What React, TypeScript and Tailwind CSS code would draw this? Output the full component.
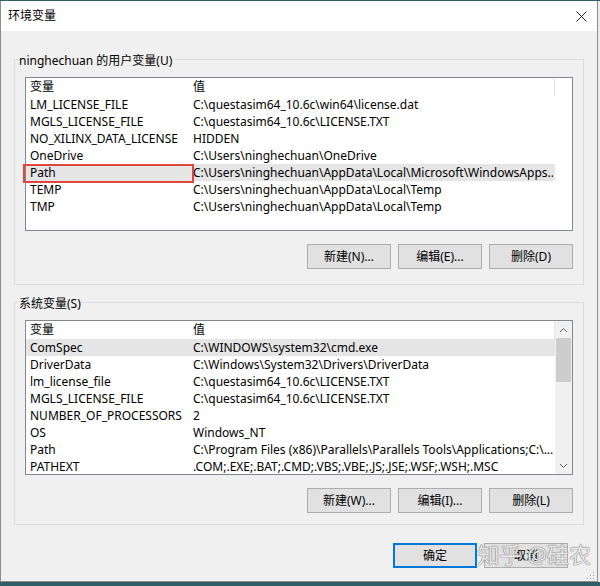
import React from "react"

type Row = { name: string; value: string; selected?: boolean; marked?: boolean }

const userVars: Row[] = [
  { name: "LM_LICENSE_FILE", value: "C:\\questasim64_10.6c\\win64\\license.dat" },
  { name: "MGLS_LICENSE_FILE", value: "C:\\questasim64_10.6c\\LICENSE.TXT" },
  { name: "NO_XILINX_DATA_LICENSE", value: "HIDDEN" },
  { name: "OneDrive", value: "C:\\Users\\ninghechuan\\OneDrive" },
  {
    name: "Path",
    value: "C:\\Users\\ninghechuan\\AppData\\Local\\Microsoft\\WindowsApps...",
    selected: true,
    marked: true,
  },
  { name: "TEMP", value: "C:\\Users\\ninghechuan\\AppData\\Local\\Temp" },
  { name: "TMP", value: "C:\\Users\\ninghechuan\\AppData\\Local\\Temp" },
]

const systemVars: Row[] = [
  { name: "ComSpec", value: "C:\\WINDOWS\\system32\\cmd.exe", selected: true },
  { name: "DriverData", value: "C:\\Windows\\System32\\Drivers\\DriverData" },
  { name: "lm_license_file", value: "C:\\questasim64_10.6c\\LICENSE.TXT" },
  { name: "MGLS_LICENSE_FILE", value: "C:\\questasim64_10.6c\\LICENSE.TXT" },
  { name: "NUMBER_OF_PROCESSORS", value: "2" },
  { name: "OS", value: "Windows_NT" },
  { name: "Path", value: "C:\\Program Files (x86)\\Parallels\\Parallels Tools\\Applications;C:\\..." },
  { name: "PATHEXT", value: ".COM;.EXE;.BAT;.CMD;.VBS;.VBE;.JS;.JSE;.WSF;.WSH;.MSC" },
]

function WinButton({ label, primary }: { label: string; primary?: boolean }) {
  return (
    <button
      className={
        "h-[25px] w-[84px] bg-[#e1e1e1] text-[12px] text-black flex items-center justify-center " +
        (primary ? "border-2 border-[#0078d7]" : "border border-[#adadad]")
      }
    >
      {label}
    </button>
  )
}

function VarList({ rows, scroll }: { rows: Row[]; scroll?: boolean }) {
  return (
    <div className="relative flex h-full border border-[#828790] bg-white">
      <div className="flex flex-1 flex-col">
        <div className="flex h-[18px] shrink-0 items-center">
          <div className="w-[165px] pl-[4px]">变量</div>
          <div className="h-full w-[364px] border-r border-[#e5e5e5] pl-[2px] leading-[18px]">值</div>
        </div>
        {rows.map((r) => (
          <div key={r.name} className="relative flex h-[17px] shrink-0 items-center">
            <div className={"flex h-full w-[529px] items-center " + (r.selected ? "bg-[#e5e5e5]" : "")}>
              <div className="flex h-full w-[165px] items-center whitespace-nowrap pl-[4px]">{r.name}</div>
              <div className="w-[362px] overflow-hidden whitespace-nowrap pl-[2px]">{r.value}</div>
            </div>
            {r.marked && (
              <div className="pointer-events-none absolute -left-[3px] -top-[0px] h-[19px] w-[171px] border-2 border-[#e0463a]" />
            )}
          </div>
        ))}
      </div>
      {scroll && (
        <div className="flex w-[17px] shrink-0 flex-col items-center bg-[#f0f0f0]">
          <div className="flex h-[17px] w-full items-center justify-center">
            <svg width="9" height="6" viewBox="0 0 9 6">
              <path d="M1 5 L4.5 1.5 L8 5" fill="none" stroke="#606060" strokeWidth="1" />
            </svg>
          </div>
          <div className="h-[44px] w-[15px] bg-[#cdcdcd]" />
          <div className="flex-1" />
          <div className="flex h-[17px] w-full items-center justify-center">
            <svg width="9" height="6" viewBox="0 0 9 6">
              <path d="M1 1 L4.5 4.5 L8 1" fill="none" stroke="#606060" strokeWidth="1" />
            </svg>
          </div>
        </div>
      )}
    </div>
  )
}

function Group({
  title,
  rows,
  scroll,
  buttons,
  height,
  listHeight,
}: {
  title: string
  rows: Row[]
  scroll?: boolean
  buttons: string[]
  height: string
  listHeight: string
}) {
  return (
    <div className={"relative mx-[13px] border border-[#dcdcdc] px-[10px] pt-[17px] " + height}>
      <span className="absolute -top-[7px] left-[3px] bg-[#f0f0f0] px-[1px] leading-[16px]">{title}</span>
      <div className={listHeight}>
        <VarList rows={rows} scroll={scroll} />
      </div>
      <div className="mt-[13px] flex justify-end gap-[7px]">
        {buttons.map((b) => (
          <WinButton key={b} label={b} />
        ))}
      </div>
    </div>
  )
}

export default function App() {
  return (
    <div className="flex h-[586px] w-[600px] flex-col bg-[#2e5e66] font-['Noto_Sans','Noto_Sans_CJK_SC',sans-serif] text-[12px] text-black">
      <div className="h-[1px] shrink-0" />
      <div className="flex flex-1 bg-[#ececec]">
        <div className="flex w-[598px] flex-col border-x border-b border-[#8c8c8c] bg-[#f0f0f0]">
          {/* title bar */}
          <div className="flex h-[30px] shrink-0 items-center justify-between bg-white pl-[7px] pr-[10px]">
            <span className="text-[12px]">环境变量</span>
            <svg width="11" height="11" viewBox="0 0 11 11">
              <path d="M0.5 0.5 L10.5 10.5 M10.5 0.5 L0.5 10.5" stroke="#222" strokeWidth="1" />
            </svg>
          </div>

          <div className="mt-[28px]">
            <Group
              title="ninghechuan 的用户变量(U)"
              rows={userVars}
              buttons={["新建(N)...", "编辑(E)...", "删除(D)"]}
              height="h-[226px]"
              listHeight="h-[154px]"
            />
          </div>

          <div className="mt-[17px]">
            <Group
              title="系统变量(S)"
              rows={systemVars}
              scroll
              buttons={["新建(W)...", "编辑(I)...", "删除(L)"]}
              height="h-[223px]"
              listHeight="h-[155px]"
            />
          </div>

          <div className="relative mt-[18px] flex justify-end gap-[7px] pr-[29px]">
            <WinButton label="确定" primary />
            <WinButton label="取消" />
            <span className="pointer-events-none absolute right-[6px] top-[-4px] text-[22px] leading-[30px] tracking-[0px] text-white/85 [text-shadow:0_0_1px_#666,0_0_1px_#666]">
              知乎 @硅农
            </span>
          </div>
          <div className="flex-1" />
          <div className="flex justify-end pb-[1px] pr-[2px]">
            <svg width="8" height="8" viewBox="0 0 8 8">
              <rect x="6" y="6" width="1" height="1" fill="#999" />
              <rect x="3" y="6" width="1" height="1" fill="#999" />
              <rect x="6" y="3" width="1" height="1" fill="#999" />
              <rect x="0" y="6" width="1" height="1" fill="#999" />
              <rect x="3" y="3" width="1" height="1" fill="#999" />
              <rect x="6" y="0" width="1" height="1" fill="#999" />
            </svg>
          </div>
        </div>
      </div>
      <div className="h-[4px] shrink-0" />
    </div>
  )
}
